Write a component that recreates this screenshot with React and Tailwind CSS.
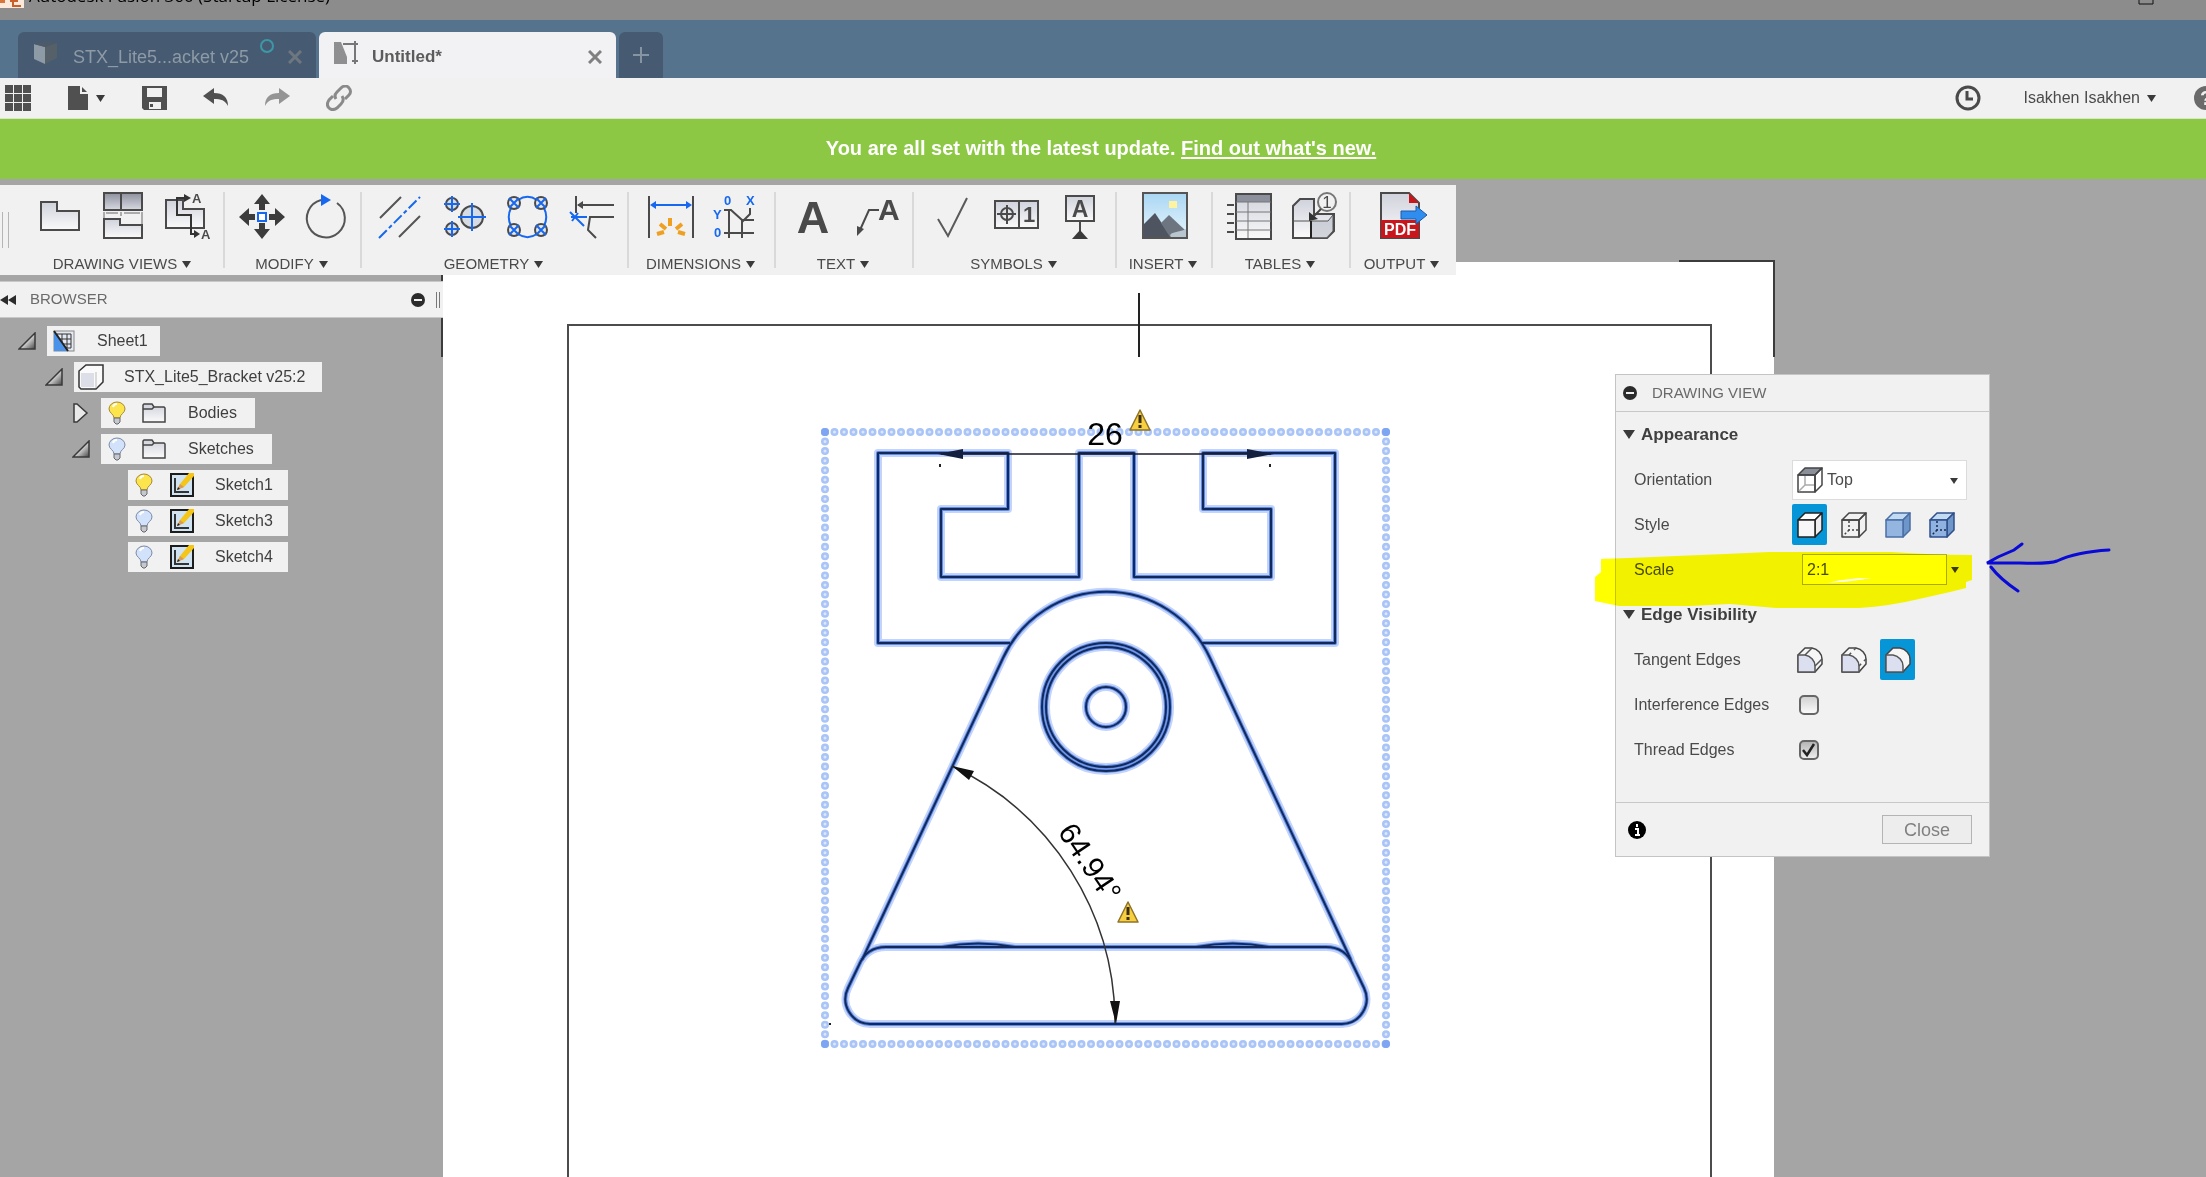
import { useState } from 'react';

const Caret = ({ className = 'w-[10px] h-[8px]' }) => (
  <svg viewBox="0 0 10 8" className={className} preserveAspectRatio="none" aria-hidden="true">
    <path d="M0 0H10L5 8Z" fill="#3a3a3a" />
  </svg>
);

const MinusDot = () => (
  <svg viewBox="0 0 14 14" className="w-[14px] h-[14px]">
    <circle cx="7" cy="7" r="7" fill="#2b2b2b" />
    <rect x="3" y="6" width="8" height="2" fill="#f1f1f1" />
  </svg>
);

const TitleBar = () => (
  <div className="h-5 overflow-hidden bg-[#8c8c8c] flex items-start justify-between pr-[52px]">
    <div className="flex items-end -mt-[16px]">
      <svg viewBox="0 0 24 24" className="w-6 h-6">
        <rect width="24" height="24" fill="#fbe9dc" />
        <path d="M0 14h5v5H0z" fill="#d9743c" />
        <path d="M10 17h8M13 17v5h8" stroke="#c9602b" strokeWidth="2" fill="none" />
      </svg>
      <span className="ml-[5px] text-[17px] leading-6 text-black whitespace-nowrap font-['Open_Sans','Noto_Sans',sans-serif]">
        Autodesk Fusion 360 (Startup License)
      </span>
    </div>
    <svg viewBox="0 0 16 5" className="w-4 h-[5px]">
      <path d="M1 0V4H15V0" fill="none" stroke="#111" strokeWidth="1" />
    </svg>
  </div>
);

const CloseX = ({ color }) => (
  <svg viewBox="0 0 14 14" className="w-[14px] h-[14px]">
    <path d="M1 1L13 13M13 1L1 13" stroke={color} strokeWidth="3" />
  </svg>
);

const DocumentTabs = () => (
  <div className="h-[58px] bg-[#55738d] flex items-end pl-[18px] gap-[3px]">
    <div className="relative w-[298px] h-[46px] rounded-t-md bg-[#465b72] flex items-center pl-[15px] pr-[14px]">
      <svg viewBox="0 0 24 24" className="w-6 h-6 -mt-1">
        <path d="M1 3L12 6V23L1 18Z" fill="#8e9aa6" />
        <path d="M1 3L12 0L24 2L12 6Z" fill="#4d5a68" />
        <path d="M12 6L24 2V17L12 23Z" fill="#566069" />
      </svg>
      <button className="ml-4 mt-1 text-[18px] leading-6 text-[#8e9aa6] whitespace-nowrap">STX_Lite5...acket v25</button>
      <svg viewBox="0 0 16 16" className="absolute left-[241px] top-[6px] w-4 h-4">
        <circle cx="8" cy="8" r="6" fill="none" stroke="#3c98a8" strokeWidth="2" />
      </svg>
      <button aria-label="Close tab" className="ml-auto mt-1">
        <CloseX color="#6e7780" />
      </button>
    </div>
    <div className="w-[297px] h-[46px] rounded-t-md bg-[#f2f2f5] flex items-center pl-[15px] pr-[14px]">
      <svg viewBox="0 0 24 24" className="w-6 h-6 -mt-1">
        <path d="M0 1H7L13 16V23H0Z" fill="#8f8f92" />
        <path d="M9 3H24M21 0V23M18 20H24" fill="none" stroke="#77777a" strokeWidth="2" />
      </svg>
      <button className="ml-[14px] mt-1 text-[17px] leading-6 font-bold text-[#5c5c5c]">Untitled*</button>
      <button aria-label="Close tab" className="ml-auto mt-1">
        <CloseX color="#808080" />
      </button>
    </div>
    <button aria-label="New tab" className="w-11 h-[46px] rounded-t-md bg-[#465b72] grid place-items-center">
      <svg viewBox="0 0 16 16" className="w-4 h-4">
        <path d="M8 0V16M0 8H16" stroke="#8795a3" strokeWidth="2" />
      </svg>
    </button>
  </div>
);

const QuickAccessBar = () => (
  <div className="h-[41px] bg-[#f1f1f1] border-b border-[#d9e8c4] overflow-hidden flex items-center justify-between">
    <div className="flex items-center pl-[5px]">
      <button aria-label="Data panel">
        <svg viewBox="0 0 26 26" className="w-[26px] h-[26px]" fill="#505050">
          {[0, 9, 18].map((y) => [0, 9, 18].map((x) => <rect key={`${x}-${y}`} x={x} y={y} width="8" height="8" />))}
        </svg>
      </button>
      <button aria-label="File" className="ml-[37px] flex items-center gap-2">
        <svg viewBox="0 0 20 24" className="w-5 h-6">
          <path d="M0 0H12V8H20V24H0Z" fill="#505050" />
          <path d="M14 1L19 6H14Z" fill="#505050" />
        </svg>
        <Caret className="w-[9px] h-[7px]" />
      </button>
      <button aria-label="Save" className="ml-[37px]">
        <svg viewBox="0 0 25 24" className="w-[25px] h-6">
          <path d="M0 0H25V24H2L0 22Z" fill="#505050" />
          <rect x="5" y="2" width="15" height="9" fill="#f1f1f1" />
          <rect x="7" y="16" width="12" height="7" fill="#f1f1f1" />
          <rect x="8" y="18" width="3" height="3" fill="#505050" />
        </svg>
      </button>
      <button aria-label="Undo" className="ml-9">
        <svg viewBox="0 0 26 20" className="w-[26px] h-5">
          <path d="M0 8L11 0V5C20 5 25 9 25 18C22 12 18 11 11 11V16Z" fill="#505050" />
        </svg>
      </button>
      <button aria-label="Redo" className="ml-9">
        <svg viewBox="0 0 26 20" className="w-[26px] h-5">
          <path d="M25 8L14 0V5C5 5 0 9 0 18C3 12 7 11 14 11V16Z" fill="#949494" />
        </svg>
      </button>
      <button aria-label="Link" className="ml-[35px]">
        <svg viewBox="0 0 26 26" className="w-[26px] h-[26px]" fill="none" stroke="#8a8a8a" strokeWidth="3">
          <path d="M10 14C8 11 9 9 11 7L15 3C18 0 22 1 23 3C25 5 25 8 23 10L19 14" />
          <path d="M16 11C18 14 17 17 15 19L11 23C8 25 5 25 3 23C1 21 1 18 3 15L7 11" />
        </svg>
      </button>
    </div>
    <div className="flex items-center -mr-3">
      <button aria-label="Job status">
        <svg viewBox="0 0 26 26" className="w-[26px] h-[26px]" fill="none" stroke="#4a4a4a">
          <circle cx="13" cy="13" r="11" strokeWidth="3" />
          <path d="M12 6V14H18" strokeWidth="3" />
        </svg>
      </button>
      <button className="ml-[42px] flex items-center gap-[7px] text-base text-[#4a4a4a] whitespace-nowrap">
        Isakhen Isakhen
        <Caret className="w-[9px] h-[7px]" />
      </button>
      <button aria-label="Help" className="ml-[38px] w-6 h-6 rounded-full bg-[#6a6a6a] text-[#f1f1f1] text-[20px] leading-6 font-bold">
        ?
      </button>
    </div>
  </div>
);

const UpdateBanner = () => (
  <div className="h-[60px] bg-[#8dc845] flex items-center justify-center text-white text-[20px] leading-7 font-bold pr-1 pb-[2px]">
    <p className="whitespace-nowrap">
      You are all set with the latest update.{' '}
      <a href="#whats-new" className="underline underline-offset-2">
        Find out what's new.
      </a>
    </p>
  </div>
);

// Ribbon drawings, all on a 48x48 grid
const dark = '#4a4a4a';
const blue = '#1768f0';

const Cross = ({ x, y, r }) => <path d={`M${x - r} ${y}H${x + r}M${x} ${y - r}V${y + r}`} stroke={blue} strokeWidth="2" />;

const ICONS = {
  baseView: <path d="M5 10H21V19H43V38H5Z" fill="url(#steel)" stroke={dark} strokeWidth="2" />,
  projectedView: (
    <>
      <rect x="4" y="1" width="38" height="17" fill="url(#darkSteel)" stroke={dark} strokeWidth="2" />
      <path d="M21 1V18" stroke={dark} strokeWidth="2" />
      <path d="M4 20V27M21 20V24M42 20V32M6 21H18M24 21H40" stroke="#666" strokeWidth="1" />
      <path d="M4 27H20V33H42V46H4Z" fill="url(#steel)" stroke={dark} strokeWidth="2" />
    </>
  ),
  sectionView: (
    <>
      <path d="M2 8H19V17H40V36H2Z" fill="url(#steel)" stroke={dark} strokeWidth="2" />
      <path d="M21 6H13V23H27V42H32" fill="none" stroke="#333" strokeWidth="2" />
      <path d="M20 2L27 6L20 10ZM30 38L36 42L30 46Z" fill="#333" />
      <text x="28" y="11" fontSize="13" fontWeight="bold" fill={dark}>A</text>
      <text x="37" y="47" fontSize="13" fontWeight="bold" fill={dark}>A</text>
    </>
  ),
  move: (
    <g fill="#3c3c3c">
      <path d="M24 2L32 12H27V18H21V12H16ZM24 47L32 37H27V31H21V37H16ZM1 25L11 16V22H17V28H11V34ZM47 25L37 16V22H31V28H37V34Z" />
      <rect x="20" y="21" width="8" height="8" fill="#fff" stroke={blue} strokeWidth="2" />
    </g>
  ),
  rotate: (
    <>
      <path d="M35 11A19 19 0 1 1 19 8" fill="none" stroke="#555" strokeWidth="2" />
      <path d="M19 2L29 8L19 14Z" fill={blue} />
    </>
  ),
  centerline: (
    <>
      <path d="M4 26L25 5M23 45L44 24" stroke="#555" strokeWidth="2" />
      <path d="M3 46L44 5" stroke={blue} strokeWidth="2" strokeDasharray="11 3 4 3" />
    </>
  ),
  centerMark: (
    <>
      <g fill="#d7dbe2" stroke={dark} strokeWidth="2">
        <circle cx="12" cy="12" r="6" />
        <circle cx="12" cy="37" r="6" />
        <circle cx="32" cy="25" r="11" />
      </g>
      <Cross x={12} y={12} r={8} />
      <Cross x={12} y={37} r={8} />
      <Cross x={32} y={25} r={14} />
    </>
  ),
  centerPattern: (
    <>
      <path d="M14 8C20 4 27 4 33 8M14 42C20 46 27 46 33 42M7 16C4 22 4 28 7 34M40 16C43 22 43 28 40 34" fill="none" stroke={blue} strokeWidth="2" />
      {[[10, 11], [37, 11], [10, 38], [37, 38]].map(([x, y]) => (
        <g key={`${x}-${y}`}>
          <circle cx={x} cy={y} r="6" fill="#e4e6ea" stroke={dark} strokeWidth="2" />
          <path d={`M${x - 5} ${y - 5}L${x + 5} ${y + 5}M${x + 5} ${y - 5}L${x - 5} ${y + 5}`} stroke={blue} strokeWidth="2" />
        </g>
      ))}
    </>
  ),
  edgeExtension: (
    <>
      <path d="M8 4V21M10 13H46M46 25H22L20 38L28 46" fill="none" stroke={dark} strokeWidth="2" />
      <path d="M9 13L15 9V17Z" fill={dark} />
      <path d="M2 20L16 34M3 25H19M4 29L10 21" fill="none" stroke={blue} strokeWidth="2" />
    </>
  ),
  dimension: (
    <>
      <path d="M2 4V46M46 4V46" stroke={dark} strokeWidth="2" />
      <path d="M5 13H43" stroke={blue} strokeWidth="2" />
      <path d="M3 13L9 9V17ZM45 13L39 9V17Z" fill={blue} />
      <path d="M10 42L17 40M13 32L19 37M23 26V34M35 32L29 37M38 42L31 40" stroke="#f0a020" strokeWidth="4" />
    </>
  ),
  ordinate: (
    <>
      <g fontSize="13" fontWeight="bold" fill={blue}>
        <text x="13" y="13">0</text>
        <text x="35" y="13">X</text>
        <text x="2" y="27">Y</text>
        <text x="3" y="45">0</text>
      </g>
      <path d="M18 18V46M13 18H20L31 28V46M39 16V22L31 30M31 28H43M13 41H43" fill="none" stroke={dark} strokeWidth="2" />
    </>
  ),
  text: <text x="24" y="41" fontSize="45" fontWeight="bold" textAnchor="middle" fill={dark}>A</text>,
  leader: (
    <>
      <path d="M26 18H16L7 38" fill="none" stroke={dark} strokeWidth="2" />
      <path d="M4 44L4 34L11 37Z" fill={dark} />
      <text x="25" y="28" fontSize="30" fontWeight="bold" fill={dark}>A</text>
    </>
  ),
  surface: <path d="M10 27L20 44L39 6" fill="none" stroke="#5a5a5a" strokeWidth="2" />,
  featureFrame: (
    <>
      <path d="M3 9H46V36H3Z" fill="url(#steel)" stroke={dark} strokeWidth="2" />
      <path d="M27 9V36M5 22H24M15 13V32" stroke={dark} strokeWidth="2" />
      <circle cx="15" cy="22" r="6" fill="none" stroke={dark} strokeWidth="2" />
      <text x="37" y="30" fontSize="22" fontWeight="bold" textAnchor="middle" fill={dark}>1</text>
    </>
  ),
  datum: (
    <>
      <rect x="10" y="4" width="28" height="25" fill="url(#steel)" stroke={dark} strokeWidth="2" />
      <text x="24" y="25" fontSize="23" fontWeight="bold" textAnchor="middle" fill={dark}>A</text>
      <path d="M24 29V40" stroke={dark} strokeWidth="2" />
      <path d="M24 38L32 47H16Z" fill="#3a3a3a" />
    </>
  ),
  image: (
    <>
      <rect x="2" y="1" width="44" height="45" fill="url(#sky)" stroke="#555" strokeWidth="2" />
      <rect x="28" y="9" width="8" height="7" fill="#fdf3a0" />
      <path d="M3 32L14 21L30 45H3Z" fill="#4e5560" />
      <path d="M20 31L28 23L45 39V45H29Z" fill="#6d7680" />
      <path d="M30 45C26 40 40 40 45 37V45Z" fill="#b9c6cf" />
    </>
  ),
  table: (
    <>
      <rect x="10" y="2" width="35" height="45" fill="url(#steel)" stroke={dark} strokeWidth="2" />
      <rect x="11" y="3" width="33" height="7" fill="#8b909c" />
      <path d="M10 10H45M10 20H45M10 29H45M10 38H45M22 10V46" stroke="#777" strokeWidth="1" />
      <path d="M1 13H8M1 22H8M1 31H8M1 40H8" stroke={dark} strokeWidth="2" />
    </>
  ),
  balloon: (
    <>
      <path d="M3 46V14L10 7H24V22H44V39L37 46Z" fill="url(#steel)" stroke={dark} strokeWidth="2" />
      <path d="M3 29H21V46H37L43 39V23L38 29H21" fill="#b9bdc8" fillOpacity="0.6" stroke="#555" strokeWidth="1" />
      <path d="M21 29V46" stroke="#222" strokeWidth="2" />
      <circle cx="37" cy="10" r="9" fill="#f1f1f1" stroke="#777" strokeWidth="2" />
      <path d="M31 17L22 26" stroke="#444" strokeWidth="2" />
      <path d="M19 29V20L28 27Z" fill="#333" />
      <text x="37" y="16" fontSize="17" textAnchor="middle" fill={dark}>1</text>
    </>
  ),
  pdf: (
    <>
      <path d="M1 1H29L39 11V46H1Z" fill="url(#steel)" stroke={dark} strokeWidth="2" />
      <path d="M29 1L39 11H29Z" fill="#c8161d" />
      <rect x="1" y="28" width="38" height="18" fill="#c8161d" />
      <text x="20" y="43" fontSize="16" fontWeight="bold" textAnchor="middle" fill="#fff">PDF</text>
      <path d="M21 19H36V14L47 23L36 32V27H21Z" fill="#2f8df0" stroke="#1b5aa8" strokeWidth="1" />
    </>
  ),
};

const SharedGradients = () => (
  <svg className="absolute w-0 h-0" aria-hidden="true">
    <defs>
      <linearGradient id="steel" x1="0" y1="0" x2="0" y2="1">
        <stop offset="0" stopColor="#d0d2dc" />
        <stop offset="1" stopColor="#fafafa" />
      </linearGradient>
      <linearGradient id="darkSteel" x1="0" y1="0" x2="0" y2="1">
        <stop offset="0" stopColor="#8d919d" />
        <stop offset="1" stopColor="#d8dae2" />
      </linearGradient>
      <linearGradient id="sky" x1="0" y1="0" x2="0" y2="1">
        <stop offset="0" stopColor="#a9d6f4" />
        <stop offset="1" stopColor="#e8f6fb" />
      </linearGradient>
      <linearGradient id="wedge" x1="0" y1="0" x2="1" y2="1">
        <stop offset="0.4" stopColor="#f4f4f4" />
        <stop offset="1" stopColor="#444" />
      </linearGradient>
    </defs>
  </svg>
);

const RIBBON = [
  { label: 'DRAWING VIEWS', width: 'w-[202px]', icons: ['baseView', 'projectedView', 'sectionView'] },
  { label: 'MODIFY', width: 'w-[137px]', icons: ['move', 'rotate'] },
  { label: 'GEOMETRY', width: 'w-[267px]', icons: ['centerline', 'centerMark', 'centerPattern', 'edgeExtension'] },
  { label: 'DIMENSIONS', width: 'w-[147px]', icons: ['dimension', 'ordinate'] },
  { label: 'TEXT', width: 'w-[138px]', icons: ['text', 'leader'] },
  { label: 'SYMBOLS', width: 'w-[203px]', icons: ['surface', 'featureFrame', 'datum'] },
  { label: 'INSERT', width: 'w-[96px]', icons: ['image'] },
  { label: 'TABLES', width: 'w-[138px]', icons: ['table', 'balloon'] },
  { label: 'OUTPUT', width: 'w-[105px]', icons: ['pdf'] },
];

const Ribbon = () => (
  <div className="relative mt-[6px] w-fit h-[90px] bg-[#f1f1f1] flex">
    <div className="ml-[2px] mr-[14px] mt-[27px] h-9 w-[7px] border-x border-[#b5b5b5]" />
    {RIBBON.map(({ label, width, icons }, i) => (
      <div key={label} className={`${width} relative flex flex-col items-center pt-[7px]`}>
        <div className="flex gap-4">
          {icons.map((name) => (
            <button key={name} aria-label={name}>
              <svg viewBox="0 0 48 48" className="block w-12 h-12 overflow-visible">
                {ICONS[name]}
              </svg>
            </button>
          ))}
        </div>
        <button className="mt-[14px] mr-1 flex items-center gap-[5px] text-[15px] leading-5 text-[#4a4a4a] whitespace-nowrap">
          {label}
          <Caret className="w-[9px] h-[7px]" />
        </button>
        {i < RIBBON.length - 1 && <span className="absolute right-0 top-[7px] h-[76px] w-[2px] bg-[#d9d9d9]" />}
      </div>
    ))}
  </div>
);

const Bulb = ({ on }) => (
  <svg viewBox="0 0 18 24" className="w-[18px] h-6">
    <path d="M6 17C6 13 1 12 1 8A8 7 0 0 1 17 8C17 12 12 13 12 17Z" fill={on ? '#fbe44c' : '#d3e2fb'} stroke={on ? '#a88a35' : '#7c8aa5'} strokeWidth="1" />
    <path d="M5 6A4 4 0 0 1 9 3" stroke="#fff" strokeWidth="2" fill="none" />
    <path d="M6 17H12V21L10 23H8L6 21Z" fill="#c5c8d0" stroke="#666" strokeWidth="1" />
  </svg>
);

const Folder = () => (
  <svg viewBox="0 0 24 20" className="w-6 h-5">
    <path d="M1 19V2L2 1H10L12 4H22L23 5V19Z" fill="url(#steel)" stroke="#444" strokeWidth="1.5" />
    <path d="M1 6H10L12 4" fill="none" stroke="#444" strokeWidth="1.5" />
  </svg>
);

const SheetIcon = () => (
  <svg viewBox="0 0 22 22" className="w-[22px] h-[22px]">
    <rect x="1" y="1" width="20" height="20" fill="#e4e8f2" stroke="#888" strokeWidth="1" />
    <path d="M4 4H18V18H4ZM9 4V18M14 4V18M4 9H18M4 14H18" fill="none" stroke="#333" strokeWidth="1" />
    <path d="M1 1L15 21H1Z" fill="#4b93ea" />
    <path d="M1 1L15 21" stroke="#222" strokeWidth="2" />
  </svg>
);

const ComponentIcon = () => (
  <svg viewBox="0 0 26 26" className="w-[26px] h-[26px]">
    <path d="M1 7L8 1H25V18L18 25H3L1 23Z" fill="#fafafa" stroke="#333" strokeWidth="1.5" />
    <path d="M3 9H16V23H3Z" fill="#dcdfe8" />
    <path d="M18 8V24" stroke="#bbb" strokeWidth="1" />
  </svg>
);

const SketchIcon = () => (
  <svg viewBox="0 0 26 26" className="w-[26px] h-[26px]">
    <rect x="2" y="2" width="22" height="22" fill="#cfe3f2" stroke="#1c1c1c" strokeWidth="2" />
    <path d="M6 6V20H20" fill="none" stroke="#333" strokeWidth="2" />
    <path d="M8 18L11 12L20 1H25V4L15 15Z" fill="#f5c518" />
    <path d="M8 18L11 12L15 15Z" fill="#d99a5b" />
    <path d="M8 18L9 15L11 17Z" fill="#222" />
  </svg>
);

const Twisty = ({ open }) =>
  open ? (
    <svg viewBox="0 0 18 18" className="w-[18px] h-[18px]">
      <path d="M1 17L17 1V17Z" fill="url(#wedge)" stroke="#3a3a3a" strokeWidth="1.5" />
    </svg>
  ) : (
    <svg viewBox="0 0 18 20" className="w-[18px] h-5">
      <path d="M2 1H5L15 10L5 19H2Z" fill="#e9e9e9" stroke="#3a3a3a" strokeWidth="1.5" />
    </svg>
  );

const TREE = [
  { label: 'Sheet1', indent: 'pl-[18px]', open: true, icon: <SheetIcon />, box: 'pl-[6px]', gap: 'ml-[22px]', pad: 'pr-[12px]' },
  { label: 'STX_Lite5_Bracket v25:2', indent: 'pl-[45px]', open: true, icon: <ComponentIcon />, box: 'pl-1', gap: 'ml-5', pad: 'pr-[17px]' },
  { label: 'Bodies', indent: 'pl-[72px]', open: false, bulb: true, icon: <Folder />, box: 'pl-[7px]', gap: 'ml-[22px]', pad: 'pr-[18px]' },
  { label: 'Sketches', indent: 'pl-[72px]', open: true, bulb: false, icon: <Folder />, box: 'pl-[7px]', gap: 'ml-[22px]', pad: 'pr-[18px]' },
  { label: 'Sketch1', indent: 'pl-[128px]', bulb: true, icon: <SketchIcon />, box: 'pl-[7px]', gap: 'ml-5', pad: 'pr-[15px]' },
  { label: 'Sketch3', indent: 'pl-[128px]', bulb: false, icon: <SketchIcon />, box: 'pl-[7px]', gap: 'ml-5', pad: 'pr-[15px]' },
  { label: 'Sketch4', indent: 'pl-[128px]', bulb: false, icon: <SketchIcon />, box: 'pl-[7px]', gap: 'ml-5', pad: 'pr-[15px]' },
];

const BrowserPanel = () => (
  <aside className="relative mt-[6px] w-[443px]">
    <div className="h-[37px] bg-[#f1f1f1] border-y border-[#c8c8c8] flex items-center">
      <button aria-label="Collapse browser">
        <svg viewBox="0 0 16 10" className="w-4 h-[10px]">
          <path d="M8 0V10L0 5ZM16 0V10L8 5Z" fill="#2b2b2b" />
        </svg>
      </button>
      <h2 className="ml-[14px] text-[15px] text-[#6a6a6a]">BROWSER</h2>
      <button aria-label="Hide browser" className="ml-auto mr-[11px]">
        <MinusDot />
      </button>
      <span className="h-4 w-[4px] mr-[3px] border-x border-[#777]" />
    </div>
    <ul className="mt-2 flex flex-col gap-[6px]">
      {TREE.map((node) => (
        <li key={node.label} className={`${node.indent} flex items-center`}>
          {'open' in node && (
            <button aria-label={`Toggle ${node.label}`} className="mr-[11px]">
              <Twisty open={node.open} />
            </button>
          )}
          <div className={`${node.box} ${node.pad} h-[30px] bg-[#f1f1f1] flex items-center text-base text-[#3f3f3f]`}>
            {'bulb' in node && (
              <span className="mr-4">
                <Bulb on={node.bulb} />
              </span>
            )}
            {node.icon}
            <span className={`${node.gap} whitespace-nowrap`}>{node.label}</span>
          </div>
        </li>
      ))}
    </ul>
  </aside>
);

const Warning = ({ x, y }) => (
  <g transform={`translate(${x} ${y})`}>
    <path d="M11 1L21 21H1Z" fill="#f7cf3f" stroke="#8f7328" strokeWidth="1.5" strokeLinejoin="round" />
    <path d="M11 6V14M11 16V19" stroke="#3a2e0c" strokeWidth="3" />
  </g>
);

// Visible edges of the bracket, in sheet coordinates
const EDGES = [
  'M1010 643H878V453H1008V509H941V577H1079V453H1134V577H1271V509H1203V453H1335V643H1202',
  'M862 960L1003 658A114 114 0 0 1 1210 658L1351 960',
  'M859 965C864 953 873 947 886 947H1326C1339 947 1348 953 1353 965L1364 988A25 25 0 0 1 1342 1024H870A25 25 0 0 1 848 988Z',
  'M942 947Q978 940 1015 947',
  'M1196 947Q1233 940 1269 947',
  'M1042 707a64 64 0 1 0 128 0a64 64 0 1 0 -128 0',
  'M1046 707a60 60 0 1 0 120 0a60 60 0 1 0 -120 0',
  'M1086 707a20 20 0 1 0 40 0a20 20 0 1 0 -40 0',
];

const Sheet = () => (
  <svg viewBox="0 180 2206 997" className="absolute left-0 top-px w-full" fontFamily="Liberation Sans, Arial, sans-serif">
    <rect x="443" y="262" width="1331" height="915" fill="#fff" />
    <path d="M442 262V357M1679 261H1774V357" fill="none" stroke="#3c3c3c" strokeWidth="2" />
    <path d="M568 1177V325H1711V1177" fill="none" stroke="#4c4c4c" strokeWidth="2" />
    <path d="M1139 293V357" stroke="#222" strokeWidth="2" />

    {/* selection frame */}
    <g fill="none" strokeLinecap="round">
      <path d="M825 432H1386M825 1044H1386" stroke="#a9c4f6" strokeWidth="8" strokeDasharray="0 9.5" />
      <path d="M825 432V1044M1386 432V1044" stroke="#a9c4f6" strokeWidth="8" strokeDasharray="0 9.56" />
      <path d="M825 432H1386M825 1044H1386" stroke="#dce7fd" strokeWidth="3" strokeDasharray="0 9.5" />
      <path d="M825 432V1044M1386 432V1044" stroke="#dce7fd" strokeWidth="3" strokeDasharray="0 9.56" />
    </g>
    <g fill="#7da5f2">
      <circle cx="825" cy="432" r="4" />
      <circle cx="1386" cy="432" r="4" />
      <circle cx="825" cy="1044" r="4" />
      <circle cx="1386" cy="1044" r="4" />
    </g>

    <g fill="none" strokeLinejoin="round">
      {EDGES.map((d) => (
        <path key={d} d={d} stroke="#c3d3fa" strokeWidth="8" />
      ))}
      {EDGES.map((d) => (
        <path key={d} d={d} stroke="#5f8be4" strokeWidth="4" />
      ))}
      {EDGES.map((d) => (
        <path key={d} d={d} stroke="#12295c" strokeWidth="2" />
      ))}
    </g>

    {/* linear dimension */}
    <path d="M941 454H1271" stroke="#1b1b2b" strokeWidth="1.5" />
    <path d="M938 454L963 449V459ZM1274 454L1247 449V459Z" fill="#14203f" />
    <path d="M940 464V467M1270 464V467M830 1023V1025" stroke="#222" strokeWidth="2" />
    <text x="1105" y="445" fontSize="32" textAnchor="middle">26</text>
    <Warning x={1129} y={409} />

    {/* angular dimension */}
    <path d="M952 766A284 284 0 0 1 1115 1023" fill="none" stroke="#333" strokeWidth="1.5" />
    <path d="M952 766L974 771L969 780ZM1116 1024L1110 1001H1120Z" fill="#111" />
    <text transform="translate(1057 832) rotate(56)" fontSize="30">64.94°</text>
    <Warning x={1117} y={901} />
  </svg>
);

const Cube = ({ top = 'none', front = 'none', side = 'none', stroke = '#444', hidden, dashes = '2 2' }) => (
  <svg viewBox="0 0 26 26" className="w-[26px] h-[26px]" strokeLinejoin="round">
    <path d="M1 8L8 1H25L18 8Z" fill={top} stroke={stroke} strokeWidth="1.5" />
    <path d="M18 8L25 1V18L18 25Z" fill={side} stroke={stroke} strokeWidth="1.5" />
    <path d="M1 8H18V25H1Z" fill={front} stroke={stroke} strokeWidth="1.5" />
    {hidden && <path d="M8 9V18H17M8 18L2 24" fill="none" stroke={hidden} strokeWidth="1.5" strokeDasharray={dashes} />}
  </svg>
);

const RoundedCube = ({ edges }) => (
  <svg viewBox="0 0 26 26" className="w-[26px] h-[26px]" strokeLinejoin="round">
    <path d="M1 8L8 1H15C21 2 25 7 25 12V17L18 25H1Z" fill="#f6f6f6" stroke="#444" strokeWidth="1.5" />
    <path d="M1 8H8C14 9 18 14 18 19V25H1Z" fill="#dcdff0" stroke="#555" strokeWidth="1.5" />
    {edges !== 'off' && <path d="M8 8L15 1M18 19L25 12" stroke="#555" strokeWidth="1.5" strokeDasharray={edges === 'short' ? '3 4' : 'none'} />}
  </svg>
);

const STYLES = [
  { name: 'Visible edges', icon: <Cube top="#fff" front="#f7f7f7" side="#eee" stroke="#222" /> },
  { name: 'Visible and hidden edges', icon: <Cube hidden="#444" /> },
  { name: 'Shaded', icon: <Cube top="#c3daf3" front="#93b5e0" side="#6f96c9" stroke="#4a6fa5" /> },
  { name: 'Shaded with hidden edges', icon: <Cube top="#c3daf3" front="#8fb2e0" side="#6f96c9" stroke="#2f4f8a" hidden="#1b2c50" /> },
];

const TANGENTS = [
  { name: 'Full length', icon: <RoundedCube edges="full" /> },
  { name: 'Shortened', icon: <RoundedCube edges="short" /> },
  { name: 'Off', icon: <RoundedCube edges="off" /> },
];

const IconChoice = ({ options, value, onChange }) => (
  <div className="flex gap-[9px]">
    {options.map(({ name, icon }, i) => (
      <button
        key={name}
        aria-label={name}
        aria-pressed={value === i}
        onClick={() => onChange(i)}
        className={`w-[35px] h-[41px] rounded-xs grid place-items-center ${value === i ? 'bg-[#0696d7]' : ''}`}
      >
        {icon}
      </button>
    ))}
  </div>
);

const SectionHeading = ({ children }) => (
  <h3 className="h-[45px] pl-[7px] flex items-center gap-[6px] text-[17px] font-bold text-[#3f3f3f]">
    <Caret className="w-3 h-[9px]" />
    {children}
  </h3>
);

const Field = ({ id, label, children }) => (
  <div className="h-[45px] pl-[18px] flex items-center">
    <label htmlFor={id} className="w-[158px] text-base text-[#4a4a4a] whitespace-nowrap">
      {label}
    </label>
    {children}
  </div>
);

const Checkbox = ({ id, checked, onChange }) => (
  <span className="relative ml-[7px] w-5 h-5">
    <input
      id={id}
      type="checkbox"
      checked={checked}
      onChange={(e) => onChange(e.target.checked)}
      className="block appearance-none w-5 h-5 rounded-[5px] border-2 border-[#666] bg-linear-to-b from-[#d2d2d2] to-[#fafafa] checked:from-[#b5b5b5] checked:to-[#eee]"
    />
    {checked && (
      <svg viewBox="0 0 20 20" className="absolute inset-0 w-5 h-5 pointer-events-none">
        <path d="M4 10L8 15L15 4" fill="none" stroke="#222" strokeWidth="2.5" />
      </svg>
    )}
  </span>
);

// Marker stroke and pen arrow drawn over the scale row
const ScaleMarkup = () => (
  <>
    <svg viewBox="1592 540 520 72" className="absolute -left-[23px] top-[166px] w-[520px] h-[72px] max-w-none pointer-events-none mix-blend-multiply">
      <path
        fillRule="evenodd"
        fill="#ffff00"
        d="M1601 559Q1680 556 1769 552H1891Q1930 555 1972 555V580L1966 582V588L1950 592L1919 599Q1890 606 1859 608H1776L1730 604L1690 606H1619L1595 601V577L1601 572ZM1828 583Q1846 578 1872 578L1852 581Z"
      />
    </svg>
    <svg viewBox="1592 540 520 72" className="absolute -left-[23px] top-[166px] w-[520px] h-[72px] max-w-none pointer-events-none">
      <path
        d="M2022 544L2014 550L1998 557L1987 563H2020Q2050 564 2057 561Q2076 552 2109 550M1991 567Q2000 579 2018 591"
        fill="none"
        stroke="#0a0ad8"
        strokeWidth="3"
        strokeLinecap="round"
      />
    </svg>
  </>
);

const DrawingViewPanel = () => {
  const [style, setStyle] = useState(0);
  const [tangent, setTangent] = useState(2);
  const [interference, setInterference] = useState(false);
  const [thread, setThread] = useState(true);
  const [scale, setScale] = useState('2:1');

  return (
    <div className="absolute right-[216px] top-[195px] w-[375px]">
      <section className="bg-[#f1f1f1] border border-[#c4c4c4]">
        <header className="h-[37px] pl-[7px] flex items-center gap-[15px] border-b border-[#c8c8c8]">
          <button aria-label="Collapse panel" className="flex">
            <MinusDot />
          </button>
          <h2 className="text-[15px] text-[#6a6a6a]">DRAWING VIEW</h2>
        </header>
        <div className="pb-[30px]">
          <SectionHeading>Appearance</SectionHeading>
          <Field id="orientation" label="Orientation">
            <div className="relative w-[175px] h-10 bg-white border border-[#dcdcdc]">
              <select id="orientation" className="appearance-none w-full h-full pl-[34px] bg-transparent text-base text-[#4a4a4a]">
                <option>Top</option>
              </select>
              <span className="absolute left-1 top-[6px] pointer-events-none">
                <Cube top="#8a8f99" hidden="#aaa" dashes="none" />
              </span>
              <span className="absolute right-2 top-[17px] flex pointer-events-none">
                <Caret className="w-2 h-[6px]" />
              </span>
            </div>
          </Field>
          <Field label="Style">
            <IconChoice options={STYLES} value={style} onChange={setStyle} />
          </Field>
          <Field id="scale" label="Scale">
            <input
              id="scale"
              value={scale}
              onChange={(e) => setScale(e.target.value)}
              className="ml-[10px] w-[145px] h-[31px] px-1 bg-white border border-[#aaa] text-base text-[#4a4a4a]"
            />
            <button aria-label="Scale presets" className="ml-1">
              <Caret className="w-2 h-[6px]" />
            </button>
          </Field>
          <SectionHeading>Edge Visibility</SectionHeading>
          <Field label="Tangent Edges">
            <IconChoice options={TANGENTS} value={tangent} onChange={setTangent} />
          </Field>
          <Field id="interference" label="Interference Edges">
            <Checkbox id="interference" checked={interference} onChange={setInterference} />
          </Field>
          <Field id="thread" label="Thread Edges">
            <Checkbox id="thread" checked={thread} onChange={setThread} />
          </Field>
        </div>
        <footer className="h-[54px] pl-3 pr-[17px] flex items-center justify-between border-t border-[#c8c8c8]">
          <button aria-label="Info">
            <svg viewBox="0 0 18 18" className="w-[18px] h-[18px]">
              <circle cx="9" cy="9" r="9" fill="#000" />
              <path d="M9 3V6M7 8H10V14M7 14H12" fill="none" stroke="#fff" strokeWidth="2" />
            </svg>
          </button>
          <button className="w-[90px] h-[29px] border border-[#b4b4b4] bg-[#ededed] text-[18px] leading-6 text-[#808080]">Close</button>
        </footer>
      </section>
      <ScaleMarkup />
    </div>
  );
};

const App = () => (
  <div className="min-h-screen flex flex-col overflow-hidden bg-[#a5a5a5] font-['Liberation_Sans',Arial,sans-serif]">
    <SharedGradients />
    <TitleBar />
    <DocumentTabs />
    <QuickAccessBar />
    <UpdateBanner />
    <main className="relative flex-1 overflow-hidden">
      <Sheet />
      <Ribbon />
      <BrowserPanel />
      <DrawingViewPanel />
    </main>
  </div>
);

export default App;
